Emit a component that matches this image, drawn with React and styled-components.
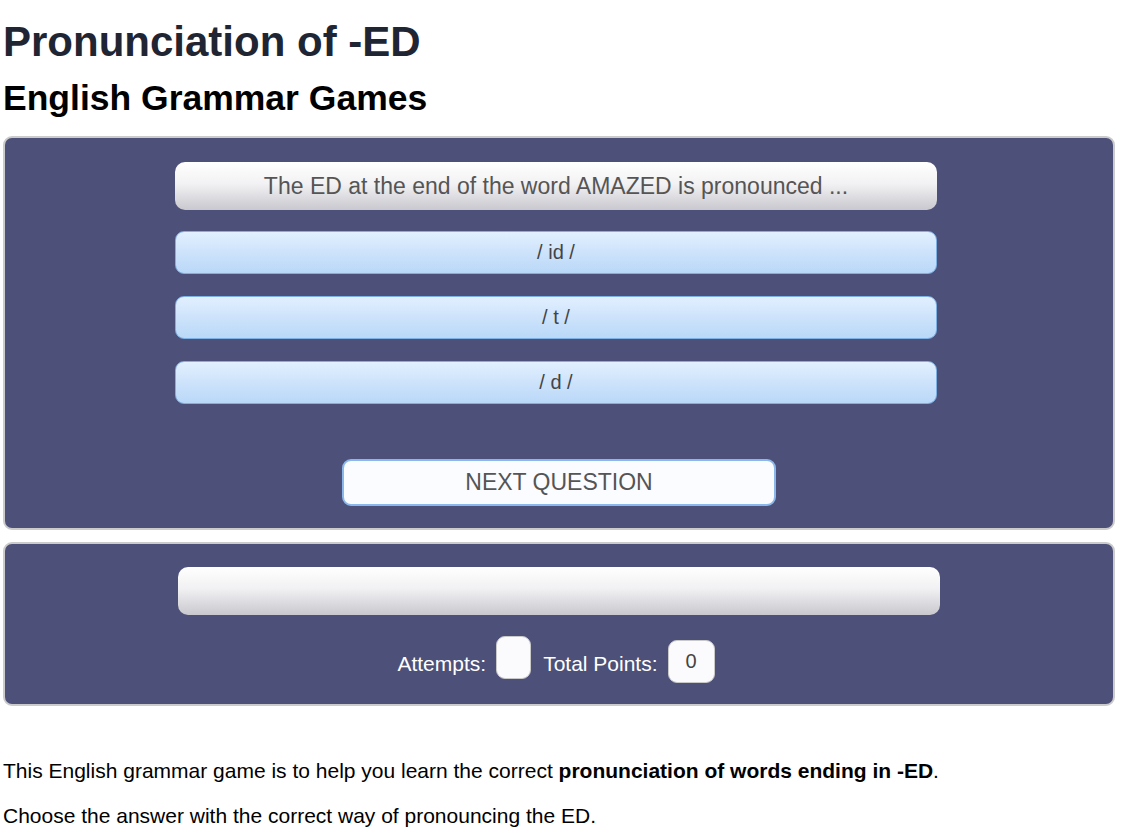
import styled, { createGlobalStyle } from "styled-components";

const GlobalStyle = createGlobalStyle`
    body {
        margin: 0;
        background: #fff;
        font-family: "Liberation Sans", Arial, sans-serif;
    }
`

const Page = styled.div`
    width: 1112px;
    padding: 18px 0 0 3px;
`

const Titulo = styled.h1`
    margin: 0;
    font-size: 42px;
    font-weight: bold;
    color: #1f2532;
`

const Subtitulo = styled.h2`
    margin: 12px 0 0;
    font-size: 35.5px;
    font-weight: bold;
    color: #000;
`

const Panel = styled.div`
    display: flex;
    flex-direction: column;
    align-items: center;
    margin-top: ${props => props.$top}px;
    padding: ${props => props.$pad};
    background-color: #4d5078;
    border: 2px solid #cbcbcb;
    border-radius: 9px;
`

const Pregunta = styled.div`
    box-sizing: border-box;
    width: 762px;
    height: 48px;
    margin-right: 6px;
    display: flex;
    align-items: center;
    justify-content: center;
    border-radius: 10px;
    background: linear-gradient(180deg, #ffffff 0%, #f2f2f4 45%, #c9c8ce 100%);
    color: #555;
    font-size: 23px;
`

const Opciones = styled.div`
    display: flex;
    flex-direction: column;
    gap: 22px;
    margin: 21px 6px 0 0;
`

const Opcion = styled.button`
    box-sizing: border-box;
    width: 762px;
    height: 43px;
    border: 1px solid #7fb0e4;
    border-radius: 9px;
    background: linear-gradient(180deg, #e2f0ff 0%, #cde3fb 50%, #b9d8f8 100%);
    color: #444;
    font-family: "Liberation Sans", Arial, sans-serif;
    font-size: 20px;
    cursor: pointer;
`

const Siguiente = styled.button`
    box-sizing: border-box;
    width: 434px;
    height: 47px;
    margin-top: 55px;
    border: 2px solid #8bb8ea;
    border-radius: 9px;
    background: #fbfcff;
    color: #555;
    font-family: "Liberation Sans", Arial, sans-serif;
    font-size: 23px;
    cursor: pointer;
`

const Resultado = styled.div`
    width: 762px;
    height: 48px;
    border-radius: 10px;
    background: linear-gradient(180deg, #ffffff 0%, #f1f1f3 45%, #c9c8ce 100%);
`

const Marcador = styled.div`
    display: flex;
    align-items: flex-start;
    margin: 21px 6px 0 0;
    color: #fff;
    font-size: 21px;
`

const Etiqueta = styled.span`
    margin: 16px 10px 0 ${props => props.$left}px;
`

const Casilla = styled.span`
    box-sizing: border-box;
    min-width: ${props => props.$width}px;
    height: 43px;
    margin-top: ${props => props.$drop}px;
    display: flex;
    align-items: center;
    justify-content: center;
    border: 1px solid #c9c9c9;
    border-radius: 9px;
    background: #fbfbfd;
    color: #444;
    font-size: 20px;
`

const Texto = styled.p`
    margin: ${props => props.$top}px 0 0;
    font-size: 21px;
    color: #000;
`

export default function App() {
    return (
        <Page>
            <GlobalStyle />
            <Titulo>Pronunciation of -ED</Titulo>
            <Subtitulo>English Grammar Games</Subtitulo>

            <Panel $top={17} $pad="24px 0 22px">
                <Pregunta>The ED at the end of the word AMAZED is pronounced ...</Pregunta>
                <Opciones>
                    <Opcion>/ id /</Opcion>
                    <Opcion>/ t /</Opcion>
                    <Opcion>/ d /</Opcion>
                </Opciones>
                <Siguiente>NEXT QUESTION</Siguiente>
            </Panel>

            <Panel $top={12} $pad="23px 0 21px">
                <Resultado />
                <Marcador>
                    <Etiqueta $left={0}>Attempts:</Etiqueta>
                    <Casilla $width={35} $drop={0}></Casilla>
                    <Etiqueta $left={12}>Total Points:</Etiqueta>
                    <Casilla $width={47} $drop={4}>0</Casilla>
                </Marcador>
            </Panel>

            <Texto $top={53}>
                This English grammar game is to help you learn the correct <b>pronunciation of words ending in -ED</b>.
            </Texto>
            <Texto $top={21}>Choose the answer with the correct way of pronouncing the ED.</Texto>
        </Page>
    )
}
